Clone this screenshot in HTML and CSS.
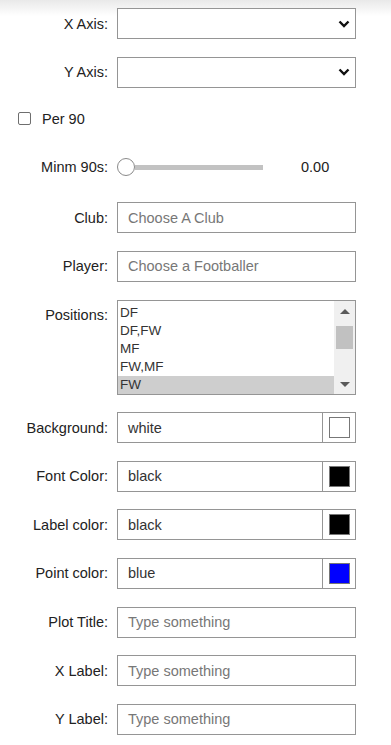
FILE: index.html
```html
<!DOCTYPE html>
<html lang="en">
<head>
  <meta charset="UTF-8">
  <meta name="viewport" content="width=device-width, initial-scale=1.0">
  <title>Scatter Plot Options</title>
  <link rel="stylesheet" href="styles.css">
</head>
<body>
  <form class="options">
    <div class="row">
      <label>X Axis:</label>
      <div class="select">
        <svg width="12" height="8" viewBox="0 0 12 8"><path d="M1.5 1.5 L6 6 L10.5 1.5" fill="none" stroke="#111" stroke-width="2.4"/></svg>
      </div>
    </div>

    <div class="row">
      <label>Y Axis:</label>
      <div class="select">
        <svg width="12" height="8" viewBox="0 0 12 8"><path d="M1.5 1.5 L6 6 L10.5 1.5" fill="none" stroke="#111" stroke-width="2.4"/></svg>
      </div>
    </div>

    <div class="check-row">
      <span class="checkbox"></span>
      <span>Per 90</span>
    </div>

    <div class="row slider-row">
      <label>Minm 90s:</label>
      <div class="slider">
        <div class="range">
          <span class="thumb"></span>
          <span class="track"></span>
        </div>
        <span class="value">0.00</span>
      </div>
    </div>

    <div class="row">
      <label>Club:</label>
      <div class="field placeholder">Choose A Club</div>
    </div>

    <div class="row">
      <label>Player:</label>
      <div class="field placeholder">Choose a Footballer</div>
    </div>

    <div class="row top">
      <label>Positions:</label>
      <div class="listbox">
        <div class="options-list">
          <div class="opt">DF</div>
          <div class="opt">DF,FW</div>
          <div class="opt">MF</div>
          <div class="opt">FW,MF</div>
          <div class="opt selected">FW</div>
        </div>
        <div class="scrollbar">
          <span class="arrow up"></span>
          <span class="bar"></span>
          <span class="arrow down"></span>
        </div>
      </div>
    </div>

    <div class="row">
      <label>Background:</label>
      <div class="color-field">
        <span class="color-text">white</span>
        <span class="swatch-cell"><span class="swatch" style="background: #ffffff;"></span></span>
      </div>
    </div>

    <div class="row">
      <label>Font Color:</label>
      <div class="color-field">
        <span class="color-text">black</span>
        <span class="swatch-cell"><span class="swatch" style="background: #000000;"></span></span>
      </div>
    </div>

    <div class="row">
      <label>Label color:</label>
      <div class="color-field">
        <span class="color-text">black</span>
        <span class="swatch-cell"><span class="swatch" style="background: #000000;"></span></span>
      </div>
    </div>

    <div class="row">
      <label>Point color:</label>
      <div class="color-field">
        <span class="color-text">blue</span>
        <span class="swatch-cell"><span class="swatch" style="background: #0000ff;"></span></span>
      </div>
    </div>

    <div class="row">
      <label>Plot Title:</label>
      <div class="field placeholder">Type something</div>
    </div>

    <div class="row">
      <label>X Label:</label>
      <div class="field placeholder">Type something</div>
    </div>

    <div class="row">
      <label>Y Label:</label>
      <div class="field placeholder">Type something</div>
    </div>
  </form>
</body>
</html>
```

FILE: styles.css
```css
* {
  margin: 0;
  padding: 0;
  box-sizing: border-box;
}

body {
  font-family: "Liberation Sans", Arial, sans-serif;
  font-size: 14.5px;
  color: #222;
  background: linear-gradient(#e9e9e9, #ffffff 16px) no-repeat, #ffffff;
}

.options {
  display: flex;
  flex-direction: column;
  gap: 17.6px;
  padding-top: 8px;
}

.row {
  display: grid;
  grid-template-columns: 108px 239px;
  column-gap: 9px;
  align-items: center;
}

.row.top {
  align-items: start;
}

.row.top label {
  padding-top: 7px;
}

label {
  text-align: right;
}

.select,
.field,
.color-field {
  height: 31px;
  border: 1px solid #959595;
  background: #fff;
}

.select {
  display: flex;
  align-items: center;
  justify-content: flex-end;
  padding-right: 5px;
}

.field {
  display: flex;
  align-items: center;
  padding-left: 10px;
}

.placeholder {
  color: #777;
}

/* checkbox row */
.check-row {
  display: flex;
  align-items: center;
  gap: 11px;
  height: 27px;
  padding-left: 18px;
}

.checkbox {
  width: 13px;
  height: 13px;
  border: 1px solid #6e6e6e;
  border-radius: 2px;
  background: #fff;
}

/* slider */
.slider-row {
  height: 35px;
}

.slider {
  display: flex;
  align-items: center;
  gap: 38px;
}

.range {
  display: flex;
  align-items: center;
  width: 146px;
}

.thumb {
  width: 18px;
  height: 18px;
  border: 1px solid #8a8a8a;
  border-radius: 50%;
  background: #fff;
  flex: none;
}

.track {
  flex: 1;
  height: 5px;
  background: #c2c2c2;
}

.value {
  color: #222;
}

/* positions listbox */
.listbox {
  display: flex;
  height: 95px;
  border: 1px solid #959595;
  background: #fff;
  overflow: hidden;
}

.options-list {
  flex: 1;
  padding-top: 3px;
  font-size: 13.5px;
  color: #333;
}

.opt {
  height: 18px;
  line-height: 18px;
  padding-left: 2px;
}

.opt.selected {
  background: #cecece;
}

.scrollbar {
  width: 21px;
  background: #f0f0f0;
  display: flex;
  flex-direction: column;
  align-items: center;
}

.arrow {
  width: 0;
  height: 0;
  border-left: 5px solid transparent;
  border-right: 5px solid transparent;
}

.arrow.up {
  margin-top: 8px;
  border-bottom: 5px solid #5a5a5a;
}

.arrow.down {
  margin-top: auto;
  margin-bottom: 7px;
  border-top: 5px solid #5a5a5a;
}

.bar {
  width: 17px;
  height: 23px;
  margin-top: 12px;
  background: #c1c1c1;
}

/* colour inputs */
.color-field {
  display: flex;
}

.color-text {
  flex: 1;
  display: flex;
  align-items: center;
  padding-left: 10px;
  color: #333;
}

.swatch-cell {
  width: 33px;
  border-left: 1px solid #959595;
  display: flex;
  align-items: center;
  justify-content: center;
}

.swatch {
  width: 21px;
  height: 21px;
  border: 1px solid #777;
}
```
